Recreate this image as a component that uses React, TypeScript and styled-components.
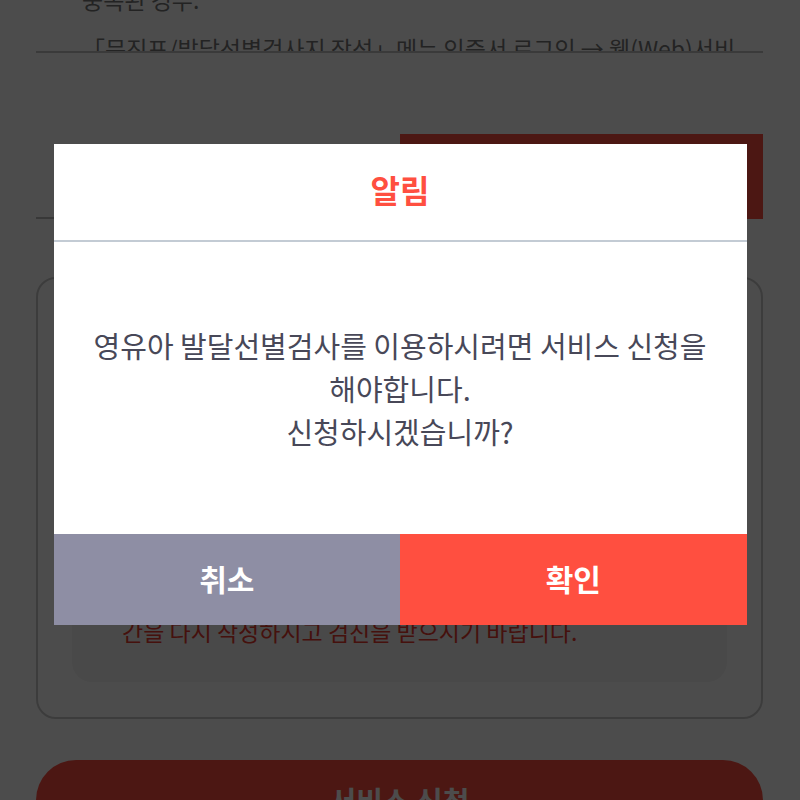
import React from 'react';
import styled, { createGlobalStyle } from 'styled-components';

const RED = '#ff4f40';

const GlobalStyle = createGlobalStyle`
  html, body {
    margin: 0;
    padding: 0;
    overflow: hidden;
    background: #ffffff;
  }
  body {
    font-family: "Noto Sans CJK KR", "Noto Sans", sans-serif;
    color: #666666;
  }
  * {
    box-sizing: border-box;
  }
`;

export default function App() {
  return (
    <>
      <GlobalStyle />
      <Page>
        <TermsBox>
          <TermsContent>
            <TermsText>중복된 경우.</TermsText>
            <TermsText>「문진표/발달선별검사지 작성」메뉴 인증서 로그인 → 웹(Web)서비스 이용</TermsText>
          </TermsContent>
        </TermsBox>

        <Tabs>
          <Tab>검진 안내</Tab>
          <Tab active>서비스 신청</Tab>
        </Tabs>

        <Card>
          <NoticeBox>
            <NoticeText>
              문진표/발달선별검사지는 검진 전에 작성하셔야 하며,
              <br />
              작성 후 검진기관에 방문하시면 됩니다.
            </NoticeText>
            <NoticeText warn>
              ※ 검진 결과 판정이 불가능한 경우 검진기관에 문의하여
              <br />
              간을 다시 작성하시고 검진을 받으시기 바랍니다.
            </NoticeText>
          </NoticeBox>
        </Card>

        <ApplyButton type="button">서비스 신청</ApplyButton>
      </Page>

      <Overlay>
        <Dialog role="dialog" aria-modal="true">
          <DialogHeader>알림</DialogHeader>
          <DialogBody>
            영유아 발달선별검사를 이용하시려면 서비스 신청을
            <br />
            해야합니다.
            <br />
            신청하시겠습니까?
          </DialogBody>
          <DialogActions>
            <DialogButton type="button" variant="cancel">
              취소
            </DialogButton>
            <DialogButton type="button" variant="confirm">
              확인
            </DialogButton>
          </DialogActions>
        </Dialog>
      </Overlay>
    </>
  );
}

const Page = styled.div`
  display: flex;
  flex-direction: column;
  padding: 0 37px 0 36px;
`;

const TermsBox = styled.div`
  height: 53px;
  overflow: hidden;
  border-bottom: 2px solid #c1c1c1;
`;

const TermsContent = styled.div`
  margin-top: -18px;
  padding: 0 12px 0 46px;
`;

const TermsText = styled.p`
  margin: 0 0 14px;
  font-size: 23px;
  line-height: 35px;
  color: #777777;
`;

const Tabs = styled.div`
  display: grid;
  grid-template-columns: 364px 1fr;
  height: 85px;
  margin-top: 81px;
`;

const Tab = styled.div<{ active?: boolean }>`
  display: flex;
  align-items: center;
  justify-content: center;
  font-size: 26px;
  font-weight: 700;
  background: ${(p) => (p.active ? RED : '#ffffff')};
  color: ${(p) => (p.active ? '#ffffff' : '#888888')};
  border-bottom: 2px solid ${(p) => (p.active ? RED : '#bdbdbd')};
`;

const Card = styled.div`
  margin-top: 58px;
  height: 442px;
  padding: 34px;
  border: 2px solid #cacaca;
  border-radius: 20px;
`;

const NoticeBox = styled.div`
  height: 369px;
  display: flex;
  flex-direction: column;
  justify-content: flex-end;
  gap: 16px;
  overflow: hidden;
  padding: 0 20px 34px 50px;
  background: #f5f5f5;
  border-radius: 20px;
`;

const NoticeText = styled.p<{ warn?: boolean }>`
  margin: 0;
  font-size: 23px;
  line-height: 34px;
  white-space: nowrap;
  color: ${(p) => (p.warn ? '#e8392e' : '#555555')};
`;

const ApplyButton = styled.button`
  margin-top: 41px;
  height: 80px;
  border: none;
  border-radius: 40px;
  background: ${RED};
  color: #ffffff;
  font-family: inherit;
  font-size: 29px;
  font-weight: 700;
`;

const Overlay = styled.div`
  position: fixed;
  inset: 0;
  display: flex;
  justify-content: center;
  align-items: flex-start;
  padding-top: 144px;
  background: rgba(0, 0, 0, 0.7);
`;

const Dialog = styled.div`
  width: 693px;
  display: flex;
  flex-direction: column;
  background: #ffffff;
`;

const DialogHeader = styled.h2`
  margin: 0;
  height: 98px;
  display: flex;
  align-items: center;
  justify-content: center;
  padding-bottom: 6px;
  border-bottom: 2px solid #c3cbd4;
  font-size: 32px;
  font-weight: 700;
  color: ${RED};
`;

const DialogBody = styled.div`
  height: 292px;
  display: flex;
  flex-direction: column;
  align-items: center;
  justify-content: center;
  text-align: center;
  font-size: 29px;
  line-height: 43px;
  color: #484858;
  white-space: nowrap;
`;

const DialogActions = styled.div`
  display: grid;
  grid-template-columns: 1fr 1fr;
  height: 91px;
`;

const DialogButton = styled.button<{ variant: 'cancel' | 'confirm' }>`
  border: none;
  margin: 0;
  padding-bottom: 4px;
  background: ${(p) => (p.variant === 'cancel' ? '#8e8ea4' : RED)};
  color: #ffffff;
  font-family: inherit;
  font-size: 30px;
  font-weight: 700;
`;
